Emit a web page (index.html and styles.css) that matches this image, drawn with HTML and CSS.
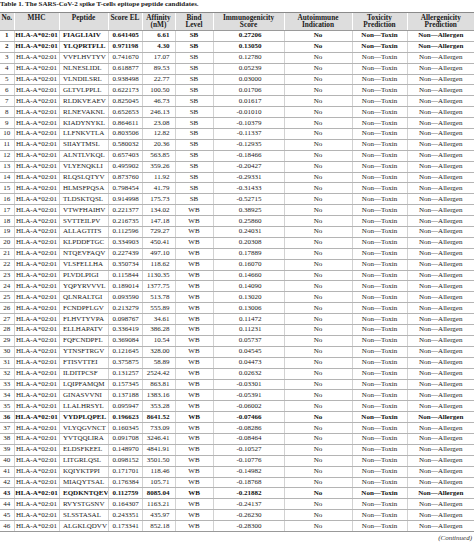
FILE: index.html
```html
<!DOCTYPE html>
<html>
<head>
<meta charset="utf-8">
<link rel="stylesheet" href="styles.css">
</head>
<body>
<div class="page">
<div class="title">Table 1. The SARS-CoV-2 spike T-cells epitope peptide candidates.</div>
<table class="data">
<colgroup>
<col class="w-no"><col class="w-mhc"><col class="w-pep"><col class="w-sc"><col class="w-af"><col class="w-bl"><col class="w-im"><col class="w-au"><col class="w-tx"><col class="w-al">
</colgroup>
<thead>
<tr><th>No.</th><th>MHC</th><th>Peptide</th><th>Score EL</th><th>Affinity<br>(nM)</th><th>Bind<br>Level</th><th>Immunogenicity<br>Score</th><th>Autoimmune<br>Indication</th><th>Toxicity<br>Prediction</th><th>Allergenicity<br>Prediction</th></tr>
</thead>
<tbody>
<tr class="b"><td class="c">1</td><td class="c">HLA-A*02:01</td><td class="l">FIAGLIAIV</td><td class="s">0.641405</td><td class="r">6.61</td><td class="c">SB</td><td class="i">0.27206</td><td class="c">No</td><td class="c">Non—Toxin</td><td class="c">Non—Allergen</td></tr>
<tr class="b"><td class="c">2</td><td class="c">HLA-A*02:01</td><td class="l">YLQPRTFLL</td><td class="s">0.971198</td><td class="r">4.30</td><td class="c">SB</td><td class="i">0.13050</td><td class="c">No</td><td class="c">Non—Toxin</td><td class="c">Non—Allergen</td></tr>
<tr><td class="c">3</td><td class="c">HLA-A*02:01</td><td class="l">VVFLHVTYV</td><td class="s">0.741670</td><td class="r">17.07</td><td class="c">SB</td><td class="i">0.12780</td><td class="c">No</td><td class="c">Non—Toxin</td><td class="c">Non—Allergen</td></tr>
<tr><td class="c">4</td><td class="c">HLA-A*02:01</td><td class="l">NLNESLIDL</td><td class="s">0.618877</td><td class="r">89.53</td><td class="c">SB</td><td class="i">0.05239</td><td class="c">No</td><td class="c">Non—Toxin</td><td class="c">Non—Allergen</td></tr>
<tr><td class="c">5</td><td class="c">HLA-A*02:01</td><td class="l">VLNDILSRL</td><td class="s">0.938498</td><td class="r">22.77</td><td class="c">SB</td><td class="i">0.03000</td><td class="c">No</td><td class="c">Non—Toxin</td><td class="c">Non—Allergen</td></tr>
<tr><td class="c">6</td><td class="c">HLA-A*02:01</td><td class="l">GLTVLPPLL</td><td class="s">0.622173</td><td class="r">100.50</td><td class="c">SB</td><td class="i">0.01706</td><td class="c">No</td><td class="c">Non—Toxin</td><td class="c">Non—Allergen</td></tr>
<tr><td class="c">7</td><td class="c">HLA-A*02:01</td><td class="l">RLDKVEAEV</td><td class="s">0.825045</td><td class="r">46.73</td><td class="c">SB</td><td class="i">0.01617</td><td class="c">No</td><td class="c">Non—Toxin</td><td class="c">Non—Allergen</td></tr>
<tr><td class="c">8</td><td class="c">HLA-A*02:01</td><td class="l">RLNEVAKNL</td><td class="s">0.652653</td><td class="r">246.13</td><td class="c">SB</td><td class="i">-0.01010</td><td class="c">No</td><td class="c">Non—Toxin</td><td class="c">Non—Allergen</td></tr>
<tr><td class="c">9</td><td class="c">HLA-A*02:01</td><td class="l">KIADYNYKL</td><td class="s">0.864611</td><td class="r">23.08</td><td class="c">SB</td><td class="i">-0.10379</td><td class="c">No</td><td class="c">Non—Toxin</td><td class="c">Non—Allergen</td></tr>
<tr><td class="c">10</td><td class="c">HLA-A*02:01</td><td class="l">LLFNKVTLA</td><td class="s">0.803506</td><td class="r">12.82</td><td class="c">SB</td><td class="i">-0.11337</td><td class="c">No</td><td class="c">Non—Toxin</td><td class="c">Non—Allergen</td></tr>
<tr><td class="c">11</td><td class="c">HLA-A*02:01</td><td class="l">SIIAYTMSL</td><td class="s">0.580032</td><td class="r">20.36</td><td class="c">SB</td><td class="i">-0.12935</td><td class="c">No</td><td class="c">Non—Toxin</td><td class="c">Non—Allergen</td></tr>
<tr><td class="c">12</td><td class="c">HLA-A*02:01</td><td class="l">ALNTLVKQL</td><td class="s">0.657403</td><td class="r">563.85</td><td class="c">SB</td><td class="i">-0.18466</td><td class="c">No</td><td class="c">Non—Toxin</td><td class="c">Non—Allergen</td></tr>
<tr><td class="c">13</td><td class="c">HLA-A*02:01</td><td class="l">VLYENQKLI</td><td class="s">0.495902</td><td class="r">359.26</td><td class="c">SB</td><td class="i">-0.20427</td><td class="c">No</td><td class="c">Non—Toxin</td><td class="c">Non—Allergen</td></tr>
<tr><td class="c">14</td><td class="c">HLA-A*02:01</td><td class="l">RLQSLQTYV</td><td class="s">0.873760</td><td class="r">11.92</td><td class="c">SB</td><td class="i">-0.29331</td><td class="c">No</td><td class="c">Non—Toxin</td><td class="c">Non—Allergen</td></tr>
<tr><td class="c">15</td><td class="c">HLA-A*02:01</td><td class="l">HLMSFPQSA</td><td class="s">0.798454</td><td class="r">41.79</td><td class="c">SB</td><td class="i">-0.31433</td><td class="c">No</td><td class="c">Non—Toxin</td><td class="c">Non—Allergen</td></tr>
<tr><td class="c">16</td><td class="c">HLA-A*02:01</td><td class="l">TLDSKTQSL</td><td class="s">0.914998</td><td class="r">175.73</td><td class="c">SB</td><td class="i">-0.52715</td><td class="c">No</td><td class="c">Non—Toxin</td><td class="c">Non—Allergen</td></tr>
<tr><td class="c">17</td><td class="c">HLA-A*02:01</td><td class="l">VTWFHAIHV</td><td class="s">0.221377</td><td class="r">134.02</td><td class="c">WB</td><td class="i">0.38925</td><td class="c">No</td><td class="c">Non—Toxin</td><td class="c">Non—Allergen</td></tr>
<tr><td class="c">18</td><td class="c">HLA-A*02:01</td><td class="l">SVTTEILPV</td><td class="s">0.216735</td><td class="r">147.18</td><td class="c">WB</td><td class="i">0.25860</td><td class="c">No</td><td class="c">Non—Toxin</td><td class="c">Non—Allergen</td></tr>
<tr><td class="c">19</td><td class="c">HLA-A*02:01</td><td class="l">ALLAGTITS</td><td class="s">0.112596</td><td class="r">729.27</td><td class="c">WB</td><td class="i">0.24031</td><td class="c">No</td><td class="c">Non—Toxin</td><td class="c">Non—Allergen</td></tr>
<tr><td class="c">20</td><td class="c">HLA-A*02:01</td><td class="l">KLPDDFTGC</td><td class="s">0.334903</td><td class="r">450.41</td><td class="c">WB</td><td class="i">0.20308</td><td class="c">No</td><td class="c">Non—Toxin</td><td class="c">Non—Allergen</td></tr>
<tr><td class="c">21</td><td class="c">HLA-A*02:01</td><td class="l">NTQEVFAQV</td><td class="s">0.227439</td><td class="r">497.10</td><td class="c">WB</td><td class="i">0.17889</td><td class="c">No</td><td class="c">Non—Toxin</td><td class="c">Non—Allergen</td></tr>
<tr><td class="c">22</td><td class="c">HLA-A*02:01</td><td class="l">VLSFELLHA</td><td class="s">0.350734</td><td class="r">118.62</td><td class="c">WB</td><td class="i">0.16070</td><td class="c">No</td><td class="c">Non—Toxin</td><td class="c">Non—Allergen</td></tr>
<tr><td class="c">23</td><td class="c">HLA-A*02:01</td><td class="l">PLVDLPIGI</td><td class="s">0.115844</td><td class="r">1130.35</td><td class="c">WB</td><td class="i">0.14660</td><td class="c">No</td><td class="c">Non—Toxin</td><td class="c">Non—Allergen</td></tr>
<tr><td class="c">24</td><td class="c">HLA-A*02:01</td><td class="l">YQPYRVVVL</td><td class="s">0.189014</td><td class="r">1377.75</td><td class="c">WB</td><td class="i">0.14090</td><td class="c">No</td><td class="c">Non—Toxin</td><td class="c">Non—Allergen</td></tr>
<tr><td class="c">25</td><td class="c">HLA-A*02:01</td><td class="l">QLNRALTGI</td><td class="s">0.093590</td><td class="r">513.78</td><td class="c">WB</td><td class="i">0.13020</td><td class="c">No</td><td class="c">Non—Toxin</td><td class="c">Non—Allergen</td></tr>
<tr><td class="c">26</td><td class="c">HLA-A*02:01</td><td class="l">FCNDPFLGV</td><td class="s">0.213279</td><td class="r">555.89</td><td class="c">WB</td><td class="i">0.13006</td><td class="c">No</td><td class="c">Non—Toxin</td><td class="c">Non—Allergen</td></tr>
<tr><td class="c">27</td><td class="c">HLA-A*02:01</td><td class="l">FLHVTYVPA</td><td class="s">0.098767</td><td class="r">34.61</td><td class="c">WB</td><td class="i">0.11472</td><td class="c">No</td><td class="c">Non—Toxin</td><td class="c">Non—Allergen</td></tr>
<tr><td class="c">28</td><td class="c">HLA-A*02:01</td><td class="l">ELLHAPATV</td><td class="s">0.336419</td><td class="r">386.28</td><td class="c">WB</td><td class="i">0.11231</td><td class="c">No</td><td class="c">Non—Toxin</td><td class="c">Non—Allergen</td></tr>
<tr><td class="c">29</td><td class="c">HLA-A*02:01</td><td class="l">FQFCNDPFL</td><td class="s">0.369084</td><td class="r">10.54</td><td class="c">WB</td><td class="i">0.05737</td><td class="c">No</td><td class="c">Non—Toxin</td><td class="c">Non—Allergen</td></tr>
<tr><td class="c">30</td><td class="c">HLA-A*02:01</td><td class="l">YTNSFTRGV</td><td class="s">0.121645</td><td class="r">328.00</td><td class="c">WB</td><td class="i">0.04545</td><td class="c">No</td><td class="c">Non—Toxin</td><td class="c">Non—Allergen</td></tr>
<tr><td class="c">31</td><td class="c">HLA-A*02:01</td><td class="l">FTISVTTEI</td><td class="s">0.375875</td><td class="r">58.89</td><td class="c">WB</td><td class="i">0.04473</td><td class="c">No</td><td class="c">Non—Toxin</td><td class="c">Non—Allergen</td></tr>
<tr><td class="c">32</td><td class="c">HLA-A*02:01</td><td class="l">ILDITPCSF</td><td class="s">0.131257</td><td class="r">2524.42</td><td class="c">WB</td><td class="i">0.02632</td><td class="c">No</td><td class="c">Non—Toxin</td><td class="c">Non—Allergen</td></tr>
<tr><td class="c">33</td><td class="c">HLA-A*02:01</td><td class="l">LQIPFAMQM</td><td class="s">0.157345</td><td class="r">863.81</td><td class="c">WB</td><td class="i">-0.03301</td><td class="c">No</td><td class="c">Non—Toxin</td><td class="c">Non—Allergen</td></tr>
<tr><td class="c">34</td><td class="c">HLA-A*02:01</td><td class="l">GINASVVNI</td><td class="s">0.137188</td><td class="r">1383.16</td><td class="c">WB</td><td class="i">-0.05391</td><td class="c">No</td><td class="c">Non—Toxin</td><td class="c">Non—Allergen</td></tr>
<tr><td class="c">35</td><td class="c">HLA-A*02:01</td><td class="l">LLALHRSYL</td><td class="s">0.095947</td><td class="r">353.28</td><td class="c">WB</td><td class="i">-0.06002</td><td class="c">No</td><td class="c">Non—Toxin</td><td class="c">Non—Allergen</td></tr>
<tr class="b"><td class="c">36</td><td class="c">HLA-A*02:01</td><td class="l">VYDPLQPEL</td><td class="s">0.196623</td><td class="r">8641.52</td><td class="c">WB</td><td class="i">-0.07466</td><td class="c">No</td><td class="c">Non—Toxin</td><td class="c">Non—Allergen</td></tr>
<tr><td class="c">37</td><td class="c">HLA-A*02:01</td><td class="l">VLYQGVNCT</td><td class="s">0.160345</td><td class="r">733.09</td><td class="c">WB</td><td class="i">-0.08286</td><td class="c">No</td><td class="c">Non—Toxin</td><td class="c">Non—Allergen</td></tr>
<tr><td class="c">38</td><td class="c">HLA-A*02:01</td><td class="l">YVTQQLIRA</td><td class="s">0.091708</td><td class="r">3246.41</td><td class="c">WB</td><td class="i">-0.08464</td><td class="c">No</td><td class="c">Non—Toxin</td><td class="c">Non—Allergen</td></tr>
<tr><td class="c">39</td><td class="c">HLA-A*02:01</td><td class="l">ELDSFKEEL</td><td class="s">0.148970</td><td class="r">4841.91</td><td class="c">WB</td><td class="i">-0.10527</td><td class="c">No</td><td class="c">Non—Toxin</td><td class="c">Non—Allergen</td></tr>
<tr><td class="c">40</td><td class="c">HLA-A*02:01</td><td class="l">LITGRLQSL</td><td class="s">0.098152</td><td class="r">3501.50</td><td class="c">WB</td><td class="i">-0.10776</td><td class="c">No</td><td class="c">Non—Toxin</td><td class="c">Non—Allergen</td></tr>
<tr><td class="c">41</td><td class="c">HLA-A*02:01</td><td class="l">KQIYKTPPI</td><td class="s">0.171701</td><td class="r">118.46</td><td class="c">WB</td><td class="i">-0.14982</td><td class="c">No</td><td class="c">Non—Toxin</td><td class="c">Non—Allergen</td></tr>
<tr><td class="c">42</td><td class="c">HLA-A*02:01</td><td class="l">MIAQYTSAL</td><td class="s">0.176384</td><td class="r">105.71</td><td class="c">WB</td><td class="i">-0.18768</td><td class="c">No</td><td class="c">Non—Toxin</td><td class="c">Non—Allergen</td></tr>
<tr class="b"><td class="c">43</td><td class="c">HLA-A*02:01</td><td class="l">EQDKNTQEV</td><td class="s">0.112759</td><td class="r">8085.04</td><td class="c">WB</td><td class="i">-0.21882</td><td class="c">No</td><td class="c">Non—Toxin</td><td class="c">Non—Allergen</td></tr>
<tr><td class="c">44</td><td class="c">HLA-A*02:01</td><td class="l">RVYSTGSNV</td><td class="s">0.164307</td><td class="r">1163.21</td><td class="c">WB</td><td class="i">-0.24137</td><td class="c">No</td><td class="c">Non—Toxin</td><td class="c">Non—Allergen</td></tr>
<tr><td class="c">45</td><td class="c">HLA-A*02:01</td><td class="l">SLSSTASAL</td><td class="s">0.243351</td><td class="r">435.97</td><td class="c">WB</td><td class="i">-0.26230</td><td class="c">No</td><td class="c">Non—Toxin</td><td class="c">Non—Allergen</td></tr>
<tr><td class="c">46</td><td class="c">HLA-A*02:01</td><td class="l">ALGKLQDVV</td><td class="s">0.173341</td><td class="r">852.18</td><td class="c">WB</td><td class="i">-0.28300</td><td class="c">No</td><td class="c">Non—Toxin</td><td class="c">Non—Allergen</td></tr>
</tbody>
</table>
<div class="cont">(Continued)</div>
</div>
</body>
</html>
```
FILE: styles.css
```css
html, body {
  margin: 0;
  padding: 0;
  background: #ffffff;
}
body {
  font-family: "Liberation Serif", "Times New Roman", serif;
  color: #222222;
}
.page {
  width: 474px;
}
.title {
  font-size: 7px;
  font-weight: bold;
  line-height: 9px;
  height: 12px;
  white-space: nowrap;
  color: #1a1a1a;
}
.data {
  width: 474px;
  border-collapse: collapse;
  table-layout: fixed;
  font-size: 7px;
}
.w-no { width: 14px; }
.w-mhc { width: 45px; }
.w-pep { width: 49px; }
.w-sc { width: 34px; }
.w-af { width: 33px; }
.w-bl { width: 38px; }
.w-im { width: 71px; }
.w-au { width: 68px; }
.w-tx { width: 55px; }
.w-al { width: 67px; }
.data th {
  background: #dddddd;
  color: #1a1a1a;
  font-size: 7.3px;
  font-weight: bold;
  line-height: 7.8px;
  vertical-align: top;
  text-align: center;
  padding: 0.5px 0 0 0;
  height: 16.5px;
  border-top: 1px solid #8a8a8a;
  border-bottom: 1px solid #9a9a9a;
  border-left: 1px solid #ffffff;
  white-space: nowrap;
}
.data th:first-child {
  border-left: none;
}
.data td {
  height: 9.9px;
  padding: 0;
  line-height: 9px;
  border-bottom: 1px solid #b4b4b4;
  border-left: 1px solid #d2d2d2;
  white-space: nowrap;
  overflow: hidden;
}
.data td:first-child {
  border-left: none;
}
.data tbody tr:last-child td {
  border-bottom: 1px solid #999999;
}
.b td {
  font-weight: bold;
  color: #111111;
}
.c { text-align: center; }
.l { text-align: left; padding-left: 3.5px !important; }
.s { text-align: left; padding-left: 4px !important; }
.r { text-align: right; padding-right: 5px !important; }
.i { text-align: right; padding-right: 22px !important; }
.cont {
  text-align: right;
  font-style: italic;
  font-size: 7px;
  line-height: 9px;
  padding-right: 2px;
  margin-top: 2px;
  color: #333333;
}
```
